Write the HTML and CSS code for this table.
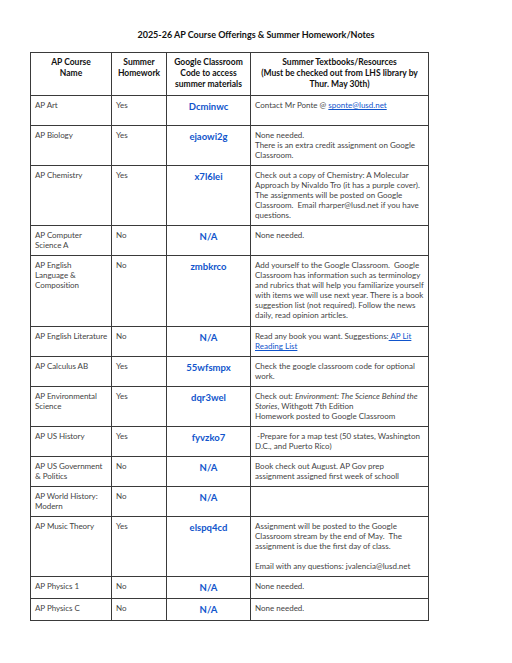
FILE: index.html
```html
<!DOCTYPE html>
<html>
<head>
<meta charset="utf-8">
<link rel="stylesheet" href="styles.css">
</head>
<body>
<div class="page">
  <h1 class="title">2025-26 AP Course Offerings &amp; Summer Homework/Notes</h1>
  <table class="grid">
    <colgroup>
      <col class="c1"><col class="c2"><col class="c3"><col class="c4">
    </colgroup>
    <thead>
      <tr>
        <th>AP Course<br>Name</th>
        <th>Summer<br>Homework</th>
        <th>Google Classroom<br>Code to access<br>summer materials</th>
        <th>Summer Textbooks/Resources<br>(Must be checked out from LHS library by<br>Thur. May 30th)</th>
      </tr>
    </thead>
    <tbody>
      <tr class="r30">
        <td class="name">AP Art</td><td>Yes</td><td class="code">Dcminwc</td>
        <td>Contact Mr Ponte @ <a class="link">sponte@lusd.net</a></td>
      </tr>
      <tr class="r40">
        <td class="name">AP Biology</td><td>Yes</td><td class="code">ejaowi2g</td>
        <td>None needed.<br>There is an extra credit assignment on Google Classroom.</td>
      </tr>
      <tr class="r60">
        <td class="name">AP Chemistry</td><td>Yes</td><td class="code">x7l6lei</td>
        <td>Check out a copy of Chemistry: A Molecular Approach by Nivaldo Tro (it has a purple cover). The assignments will be posted on Google Classroom.&nbsp; Email rharper@lusd.net if you have questions.</td>
      </tr>
      <tr class="r30">
        <td class="name">AP Computer<br>Science A</td><td>No</td><td class="code">N/A</td>
        <td>None needed.</td>
      </tr>
      <tr class="r71">
        <td class="name">AP English<br>Language &amp;<br>Composition</td><td>No</td><td class="code">zmbkrco</td>
        <td>Add yourself to the Google Classroom.&nbsp; Google Classroom has information such as terminology and rubrics that will help you familiarize yourself with items we will use next year. There is a book suggestion list (not required). Follow the news daily, read opinion articles.</td>
      </tr>
      <tr class="r30">
        <td class="name">AP English Literature</td><td>No</td><td class="code">N/A</td>
        <td>Read any book you want. Suggestions:<a class="link"> AP Lit Reading List</a></td>
      </tr>
      <tr class="r30">
        <td class="name">AP Calculus AB</td><td>Yes</td><td class="code">55wfsmpx</td>
        <td>Check the google classroom code for optional work.</td>
      </tr>
      <tr class="r40">
        <td class="name">AP Environmental<br>Science</td><td>Yes</td><td class="code">dqr3wel</td>
        <td>Check out: <em>Environment: The Science Behind the Stories</em>, Withgott 7th Edition<br>Homework posted to Google Classroom</td>
      </tr>
      <tr class="r30">
        <td class="name">AP US History</td><td>Yes</td><td class="code">fyvzko7</td>
        <td>&nbsp;-Prepare for a map test (50 states, Washington D.C., and Puerto Rico)</td>
      </tr>
      <tr class="r30">
        <td class="name">AP US Government<br>&amp; Politics</td><td>No</td><td class="code">N/A</td>
        <td>Book check out August. AP Gov prep assignment assigned first week of schooll</td>
      </tr>
      <tr class="r30">
        <td class="name">AP World History:<br>Modern</td><td>No</td><td class="code">N/A</td>
        <td></td>
      </tr>
      <tr class="r60">
        <td class="name">AP Music Theory</td><td>Yes</td><td class="code">elspq4cd</td>
        <td>Assignment will be posted to the Google Classroom stream by the end of May.&nbsp; The assignment is due the first day of class.<br><br>Email with any questions: jvalencia@lusd.net</td>
      </tr>
      <tr class="r22">
        <td class="name">AP Physics 1</td><td>No</td><td class="code">N/A</td>
        <td>None needed.</td>
      </tr>
      <tr class="r22">
        <td class="name">AP Physics C</td><td>No</td><td class="code">N/A</td>
        <td>None needed.</td>
      </tr>
    </tbody>
  </table>
</div>
</body>
</html>
```
FILE: styles.css
```css
html, body {
  margin: 0;
  padding: 0;
  background: #fff;
}
.page {
  width: 512px;
  padding-top: 29px;
  font-family: Lato, "Open Sans", sans-serif;
}
.title {
  margin: 0 0 11px 0;
  text-align: center;
  font-size: 9px;
  font-weight: 700;
  line-height: 12px;
  color: #111;
}
.grid {
  margin-left: 30px;
  width: 398px;
  border-collapse: collapse;
  table-layout: fixed;
}
.c1 { width: 81px; }
.c2 { width: 55px; }
.c3 { width: 84px; }
.c4 { width: 178px; }
.grid th, .grid td {
  border: 1px solid #3a3a3a;
  vertical-align: top;
  text-align: left;
}
.grid th {
  padding: 4px 4px 5px;
  text-align: center;
  font-size: 8.5px;
  line-height: 11px;
  font-weight: 700;
  color: #111;
  height: 33px;
}
.grid td {
  padding: 4px 4px 4px;
  font-size: 8px;
  line-height: 10.1px;
  color: #444;
  box-sizing: border-box;
}
.r22 td { height: 22px; }
.r30 td { height: 30px; }
.r40 td { height: 40px; }
.r60 td { height: 60px; }
.r71 td { height: 71px; }
.grid td.name {
  padding-right: 1px;
  white-space: nowrap;
  letter-spacing: -0.05px;
}
.grid td.code {
  text-align: center;
  font-weight: 700;
  color: #1155cc;
  font-size: 9.5px;
  line-height: 13px;
}
.link {
  color: #1155cc;
  text-decoration: underline;
}
em { font-style: italic; }
```
